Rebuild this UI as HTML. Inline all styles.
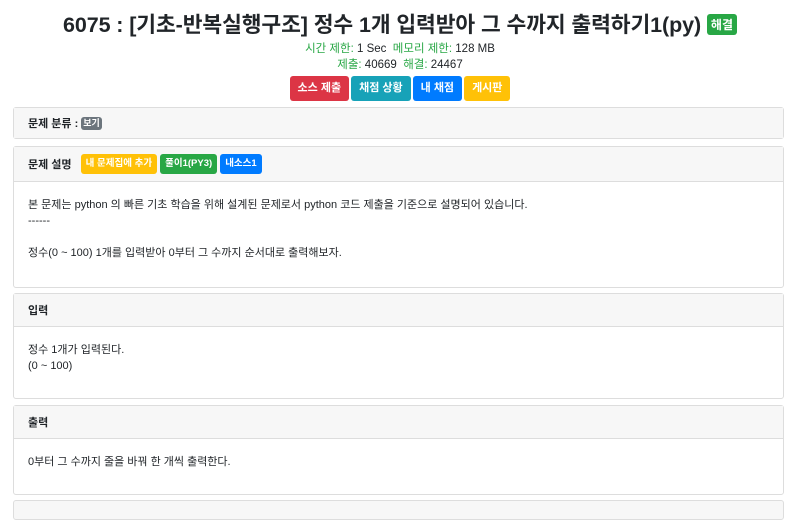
<!DOCTYPE html>
<html><head><meta charset="utf-8"><style>
*{box-sizing:border-box;margin:0;padding:0}
body{width:800px;height:506px;overflow:hidden;background:#fff;font-family:"Liberation Sans","Noto Sans CJK KR",sans-serif;color:#212529;font-size:11px}
h1{position:absolute;top:8px;left:0;width:800px;text-align:center;font-size:21.5px;font-weight:bold;letter-spacing:-0.1px}
.badge{display:inline-block;font-size:12px;color:#fff;border-radius:3px;padding:2px 4px;vertical-align:middle;position:relative;top:-2px;letter-spacing:0}
.info{position:absolute;left:0;width:800px;text-align:center;font-size:11.5px}
.g{color:#28a745}
.btns{position:absolute;top:76px;left:0;width:800px;text-align:center;font-size:0}
.btns span{display:inline-block;height:25px;line-height:25px;padding:0 8px;font-size:11px;color:#fff;border-radius:3px;margin:0 1px;font-weight:bold}
.card{position:absolute;left:13px;width:771px;border:1px solid #ddd;border-radius:3px;background:#fff}
.hd{background:#f7f7f7;border-bottom:1px solid #ddd;padding:0 14px;font-weight:bold;font-size:11px;display:flex;align-items:center}
.bd{padding:15px 14px;font-size:11px;line-height:16px}
.sb{display:inline-block;font-size:9.5px;color:#fff;border-radius:3px;padding:0 5px;height:20px;line-height:20px;margin-left:3px;font-weight:bold}
</style></head><body>
<h1>6075 : [기초-반복실행구조] 정수 1개 입력받아 그 수까지 출력하기1(py) <span class="badge" style="background:#28a745">해결</span></h1>
<div class="info" style="top:40px"><span class="g">시간 제한:</span> 1 Sec &nbsp;<span class="g">메모리 제한:</span> 128 MB</div>
<div class="info" style="top:56px"><span class="g">제출:</span> 40669 &nbsp;<span class="g">해결:</span> 24467</div>
<div class="btns"><span style="background:#dc3545">소스 제출</span><span style="background:#17a2b8">채점 상황</span><span style="background:#007bff">내 채점</span><span style="background:#ffc107">게시판</span></div>
<div class="card" style="top:107px;height:32px"><div class="hd" style="height:30px;border:none">문제 분류 : <span class="sb" style="background:#6c757d;height:13px;line-height:13px;padding:0 2px;font-size:9px">보기</span></div></div>
<div class="card" style="top:146px;height:142px"><div class="hd" style="height:35px">문제 설명 &nbsp;<span class="sb" style="background:#ffc107">내 문제집에 추가</span><span class="sb" style="background:#28a745">풀이1(PY3)</span><span class="sb" style="background:#007bff">내소스1</span></div>
<div class="bd">본 문제는 python 의 빠른 기초 학습을 위해 설계된 문제로서 python 코드 제출을 기준으로 설명되어 있습니다.<br>------<br><br>정수(0 ~ 100) 1개를 입력받아 0부터 그 수까지 순서대로 출력해보자.</div></div>
<div class="card" style="top:293px;height:106px"><div class="hd" style="height:33px">입력</div><div class="bd">정수 1개가 입력된다.<br>(0 ~ 100)</div></div>
<div class="card" style="top:405px;height:90px"><div class="hd" style="height:33px">출력</div><div class="bd">0부터 그 수까지 줄을 바꿔 한 개씩 출력한다.</div></div>
<div class="card" style="top:500px;height:20px;background:#f7f7f7"></div>
</body></html>
